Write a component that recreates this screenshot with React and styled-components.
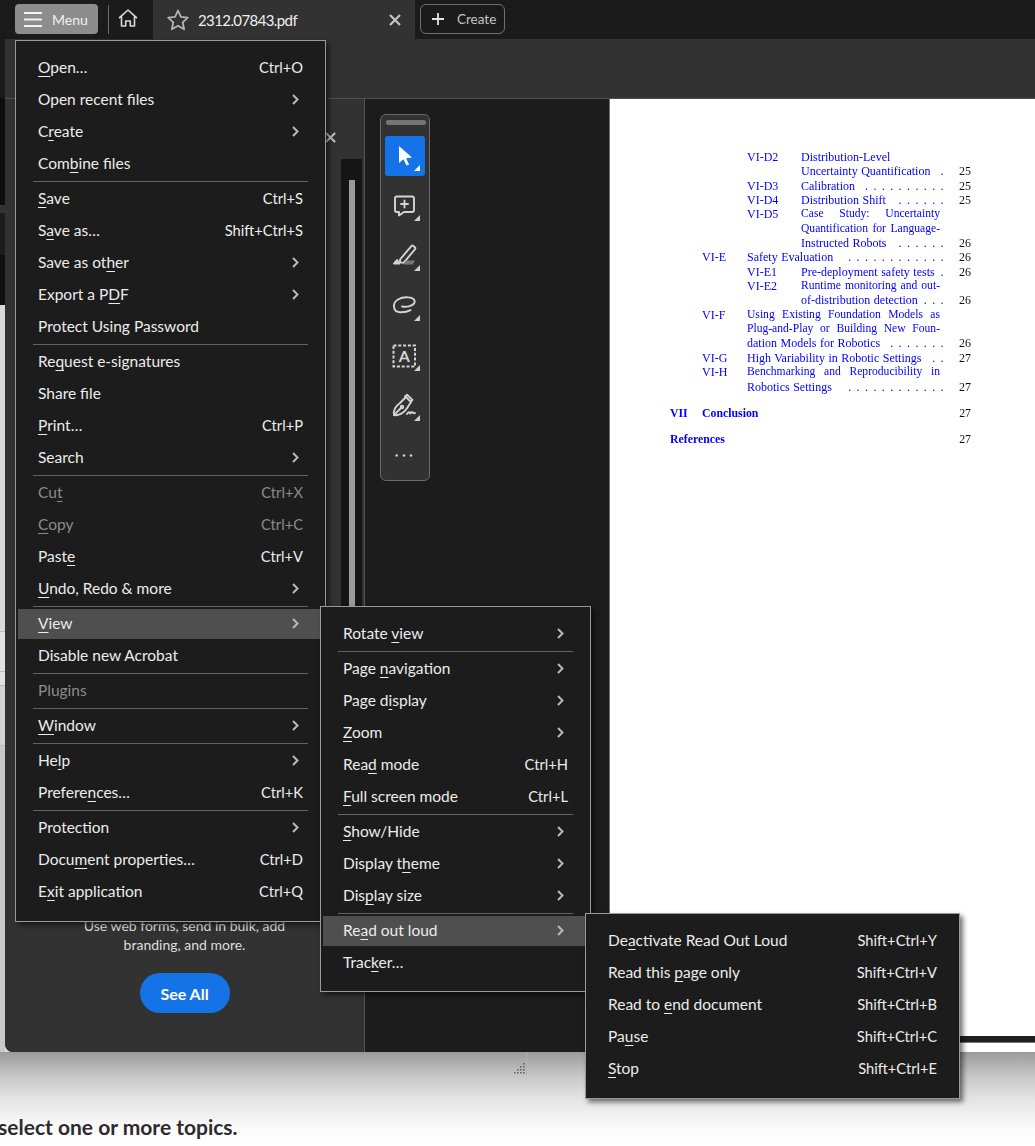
import React from 'react';
import styled, { createGlobalStyle } from 'styled-components';

const GlobalStyle = createGlobalStyle`
  html, body {
    margin: 0;
    padding: 0;
    background: #dcdcdc;
  }
  body {
    width: 1035px;
    height: 1146px;
    overflow: hidden;
    font-family: Lato, "Noto Sans", sans-serif;
  }
`;

const Screen = styled.div`
  position: relative;
  width: 1035px;
  height: 1146px;
  overflow: hidden;
`;

const Upper = styled.div`
  display: flex;
  height: 1052px;
`;

const Sliver = styled.div`
  width: 5px;
  flex: none;
  display: flex;
  flex-direction: column;
`;

const Band = styled.div`
  height: ${({ $h }) => $h}px;
  background: ${({ $c }) => $c};
  border-bottom: ${({ $line }) => ($line ? '1px solid #bdbdbd' : 'none')};
  box-sizing: border-box;
  flex: ${({ $grow }) => ($grow ? 1 : 'none')};
`;

const Win = styled.div`
  flex: 1;
  display: flex;
  flex-direction: column;
  border-radius: 0 0 0 8px;
  overflow: hidden;
  background: #323232;
`;

const TopBar = styled.div`
  height: 39px;
  flex: none;
  display: flex;
  align-items: flex-start;
  background: #1b1b1b;
  padding-left: 10px;
`;

const MenuButton = styled.div`
  width: 83px;
  height: 30px;
  margin-top: 4px;
  background: #8d8d8d;
  border-radius: 4px;
  display: flex;
  align-items: center;
  padding-left: 9px;
  gap: 10px;
  box-sizing: border-box;
  color: #f0f0f0;
  font-size: 14px;
`;

const VDivider = styled.div`
  width: 1px;
  height: 29px;
  margin: 5px 9px 0 10px;
  background: #6a6a6a;
`;

const HomeSlot = styled.div`
  width: 35px;
  height: 39px;
  display: flex;
  align-items: center;
  padding-bottom: 3px;
  box-sizing: border-box;
`;

const Tab = styled.div`
  width: 262px;
  height: 39px;
  background: #323232;
  display: flex;
  align-items: center;
  padding: 0 14px;
  box-sizing: border-box;
  color: #f0f0f0;
`;

const TabName = styled.span`
  margin-left: 9px;
  flex: 1;
  font-size: 15px;
  letter-spacing: -0.6px;
`;

const CreateButton = styled.div`
  width: 85px;
  height: 30px;
  margin: 4px 0 0 5px;
  border: 1px solid #707070;
  border-radius: 6px;
  display: flex;
  align-items: center;
  padding-left: 11px;
  gap: 13px;
  box-sizing: border-box;
  color: #c4c4c4;
  font-size: 13.5px;
`;

const ToolRow = styled.div`
  height: 60px;
  flex: none;
  background: #323232;
  border-bottom: 1px solid #4f4f4f;
  box-sizing: border-box;
`;

const Main = styled.div`
  flex: 1;
  display: flex;
  min-height: 0;
`;

const Panel = styled.div`
  width: 360px;
  flex: none;
  background: #323232;
  border-right: 1px solid #555;
  box-sizing: border-box;
  display: flex;
  flex-direction: column;
  align-items: center;
`;

const PanelHead = styled.div`
  align-self: flex-end;
  height: 60px;
  padding: 28px 28px 0 0;
  box-sizing: border-box;
`;

const ScrollTrack = styled.div`
  align-self: flex-end;
  width: 21px;
  height: 740px;
  margin-right: 2px;
  background: #151515;
  padding: 21px 0 0 8px;
  box-sizing: border-box;
`;

const ScrollThumb = styled.div`
  width: 6px;
  height: 500px;
  background: #9a9a9a;
`;

const PromoText = styled.p`
  margin: 17px 0 0;
  text-align: center;
  color: #dedede;
  font-size: 14px;
  line-height: 19px;
  width: 260px;
`;

const SeeAll = styled.div`
  margin-top: 19px;
  width: 90px;
  height: 40px;
  border-radius: 20px;
  background: #1473e6;
  color: #fff;
  font-weight: 700;
  font-size: 16px;
  display: flex;
  align-items: center;
  justify-content: center;
`;

const Canvas = styled.div`
  width: 245px;
  flex: none;
  background: #1c1c1c;
  border-right: 1px solid #6e6e6e;
  box-sizing: border-box;
  padding: 15px 0 0 15px;
`;

const Rail = styled.div`
  width: 50px;
  height: 367px;
  background: #323232;
  border: 1px solid #6a6a6a;
  border-radius: 6px;
  box-sizing: border-box;
  padding: 5px 0 0 4px;
  display: flex;
  flex-direction: column;
  gap: 10px;
`;

const RailGrip = styled.div`
  width: 40px;
  height: 5px;
  margin: 0 0 1px 1px;
  border-radius: 2px;
  background: #757575;
`;

const ToolButton = styled.div`
  position: relative;
  width: 40px;
  height: 40px;
  flex: none;
  border-radius: 3px;
  background: ${({ $active }) => ($active ? '#1473e6' : 'transparent')};

  svg {
    display: block;
  }
  &::after {
    content: ${({ $more }) => ($more ? '""' : 'none')};
    position: absolute;
    right: 5px;
    bottom: 5px;
    width: 6px;
    height: 6px;
    background: ${({ $active }) => ($active ? '#fff' : '#d2d2d2')};
    clip-path: polygon(100% 0, 100% 100%, 0 100%);
  }
`;

const PageArea = styled.div`
  flex: 1;
  display: flex;
  flex-direction: column;
  background: #fff;
`;

const Sheet = styled.div`
  flex: 1;
  padding: 51px 64px 0 60px;
  font-family: "Liberation Serif", "Times New Roman", serif;
  color: #0000ff;
  filter: blur(0.25px);
`;

const NextEdge = styled.div`
  height: 7px;
  flex: none;
  background: #1f1f1f;
  border-bottom: 1px solid #777;
  box-sizing: border-box;
`;

const NextSheet = styled.div`
  height: 9px;
  flex: none;
  background: #fff;
`;

const TocRow = styled.div`
  display: flex;
  height: 14.35px;
  line-height: 14.35px;
  white-space: nowrap;
  padding-left: ${({ $level }) => [0, 32, 77][$level]}px;
  margin-top: ${({ $gap }) => $gap || 0}px;
  font-weight: ${({ $bold }) => ($bold ? 700 : 400)};
  font-size: ${({ $bold }) => ($bold ? 11.8 : 12)}px;
`;

const TocLabel = styled.span`
  flex: none;
  width: ${({ $level }) => [32, 45, 54][$level]}px;
`;

const TocTitle = styled.span`
  flex: ${({ $fill }) => ($fill ? 1 : 'none')};
  margin-right: ${({ $fill }) => ($fill ? 31 : 0)}px;
  font-size: ${({ $fill }) => ($fill ? '11.6px' : 'inherit')};
  text-align: ${({ $fill }) => ($fill ? 'justify' : 'left')};
  text-align-last: ${({ $fill }) => ($fill ? 'justify' : 'auto')};
  white-space: normal;
  word-spacing: ${({ $fill }) => ($fill ? 0 : 0.5)}px;
`;

const Leader = styled.span`
  flex: 1;
  display: flex;
  justify-content: flex-end;
  overflow: hidden;
  letter-spacing: 5.4px;
  margin-right: 5px;
`;

const TocPage = styled.span`
  flex: none;
  width: 17px;
  text-align: right;
  color: #111;
  font-weight: 400;
`;

const Footer = styled.div`
  height: 94px;
  background: linear-gradient(#9a9a9a 0, #c6c6c6 25%, #e4e4e4 50%, #fafafa 80%, #fff 100%);
  overflow: hidden;
`;

const FooterRule = styled.div`
  width: 527px;
  height: 24px;
  border-bottom: 1px solid #c2c2c2;
  border-right: 1px solid #b0b0b0;
  box-sizing: border-box;
  display: flex;
  justify-content: flex-end;
  align-items: flex-end;
`;

const TopicsLine = styled.div`
  margin: 39px 0 0 -2px;
  font-size: 21px;
  font-weight: 700;
  color: #2c2c2c;
  line-height: 24px;
`;

const MenuPanel = styled.div`
  position: absolute;
  left: ${({ $x }) => $x}px;
  top: ${({ $y }) => $y}px;
  width: ${({ $w }) => $w}px;
  padding: 10px 2px ${({ $bottom }) => $bottom}px;
  background: #1c1c1c;
  border: 1px solid #9a9a9a;
  box-sizing: border-box;
  box-shadow: 3px 3px 5px rgba(0, 0, 0, 0.55);
  font-size: 15.5px;
  z-index: ${({ $z }) => $z};
`;

const MenuRow = styled.div`
  height: 32px;
  display: flex;
  align-items: center;
  justify-content: space-between;
  padding: 0 20px;
  color: ${({ $off }) => ($off ? '#8b8b8b' : '#ececec')};
  background: ${({ $on }) =>
    $on ? 'linear-gradient(transparent 2px, #4f4f4f 2px)' : 'none'};

  u {
    text-underline-offset: 3px;
    text-decoration-thickness: 1px;
  }
`;

const MenuKey = styled.span`
  font-size: 14.7px;
`;

const MenuSep = styled.div`
  height: 1px;
  margin: 2px 15px 0;
  background: #636363;
`;

const Chevron = styled.svg`
  width: 7px;
  height: 11px;
  margin-right: 4px;
  fill: none;
  stroke: #b9b9b9;
  stroke-width: 2;
`;

const ic = { fill: 'none', stroke: '#d4d4d4', strokeWidth: 1.9, strokeLinejoin: 'round', strokeLinecap: 'round' };

const X = ({ size, color }) => (
  <svg width={size} height={size} viewBox="0 0 12 12" fill="none" stroke={color} strokeWidth="2.2">
    <path d="M1 1l10 10M11 1L1 11" />
  </svg>
);

const Bars = () => (
  <svg width="18" height="16" viewBox="0 0 18 16" stroke="#f2f2f2" strokeWidth="2" style={{ flex: 'none' }}>
    <path d="M0 2h18M0 8.500h18M0 15h18" />
  </svg>
);

const Home = () => (
  <svg width="20" height="18" viewBox="0 0 20 18" fill="none" stroke="#d8d8d8" strokeWidth="1.6" strokeLinejoin="round">
    <path d="M1 9.200L10 1l9 8.200M3.500 7.500V17h4.200v-5h4.600v5h4.200V7.500" />
  </svg>
);

const Star = () => (
  <svg width="22" height="22" viewBox="0 0 22 22" fill="none" stroke="#b4b4b4" strokeWidth="1.8" strokeLinejoin="round" style={{ flex: 'none' }}>
    <path d="M11 1.500l2.900 6.400 6.900.8-5.100 4.700 1.400 6.900-6.100-3.500-6.100 3.500 1.400-6.900L1.200 8.700l6.900-.8z" />
  </svg>
);

const Plus = () => (
  <svg width="12" height="12" viewBox="0 0 12 12" stroke="#e4e4e4" strokeWidth="1.8" style={{ flex: 'none' }}>
    <path d="M6 0v12M0 6h12" />
  </svg>
);

const Grip = () => (
  <svg width="13" height="13" viewBox="0 0 13 13" fill="#666">
    {[[10, 1], [7, 4], [10, 4], [4, 7], [7, 7], [10, 7], [1, 10], [4, 10], [7, 10], [10, 10]].map(([x, y]) => (
      <rect key={`${x}-${y}`} x={x} y={y} width="1.6" height="1.6" />
    ))}
  </svg>
);

const icons = [
  <path key="a" d="M14 10v17l4.400-3.800 3.100 6.400 2.600-1.200-3-6.200 5.900-.6z" fill="#fff" />,
  <g key="b" {...ic}>
    <path d="M12 10.500h15a2 2 0 0 1 2 2v11.500a2 2 0 0 1-2 2h-8l-5 3.500v-3.500h-2a2 2 0 0 1-2-2V12.500a2 2 0 0 1 2-2z" />
    <path d="M19.500 14.500v7M16 18h7" />
  </g>,
  <g key="c" {...ic}>
    <path d="M15 23.500L26.300 10.200a1.500 1.500 0 0 1 2.100-.2l1.400 1.200a1.500 1.500 0 0 1 .1 2.100L18.800 26.700l-3.600-.3z" />
    <path d="M9 27.500l3-3.500 2.500 3.500z" fill="#d4d4d4" />
    <path d="M18 28.500l3-4H30l-2.500 4z" fill="#7a7a7a" stroke="none" />
  </g>,
  <path key="d" {...ic} d="M17 20.500c5 1 13-1 12.700-5.200C29.300 10.800 19 10 13 13.500 7 17 7.500 26 15.500 26.300c4 .1 7.500-.8 10-2.200" />,
  <g key="e">
    <rect x="8.500" y="9.500" width="21.500" height="21" fill="none" stroke="#d4d4d4" strokeWidth="2" strokeDasharray="3 1.800" />
    <text x="19.300" y="26" textAnchor="middle" fill="#d4d4d4" fontSize="16" fontWeight="700" fontFamily="Lato, sans-serif">A</text>
  </g>,
  <g key="f" {...ic}>
    <path d="M9 29c-1-4 1.500-9 5.500-11.500L21 11l5 5-4.500 7c-2.500 4-8.500 7-12.500 6z" />
    <path d="M20 10.500l2-1.800 5.500 5.200-1.800 2M9 29l6.500-6.500" />
    <circle cx="17" cy="21" r="1.300" />
    <path d="M22 28c1.500-2 3-2.500 3-1s2-2 3-.5 1 .8 2 .5" />
  </g>,
];

const ToolIcon = ({ children }) => (
  <svg width="40" height="40" viewBox="0 0 40 40">
    {children}
  </svg>
);

// "_" marks the letter that gets the mnemonic underline
const Mnemonic = ({ text }) => {
  const at = text.indexOf('_');
  if (at < 0) return <span>{text}</span>;
  return (
    <span>
      {text.slice(0, at)}
      <u>{text[at + 1]}</u>
      {text.slice(at + 2)}
    </span>
  );
};

const MenuList = ({ rows }) =>
  rows.map((r, i) =>
    r === '-' ? (
      <MenuSep key={i} />
    ) : (
      <MenuRow key={i} $off={r.off} $on={r.on}>
        <Mnemonic text={r.t} />
        {r.k && <MenuKey>{r.k}</MenuKey>}
        {r.sub && (
          <Chevron viewBox="0 0 7 11">
            <path d="M1 1l4.500 4.500L1 10" />
          </Chevron>
        )}
      </MenuRow>
    )
  );

const mainMenu = [
  { t: '_Open…', k: 'Ctrl+O' },
  { t: 'Open recent f_iles', sub: 1 },
  { t: 'C_reate', sub: 1 },
  { t: 'Com_bine files' },
  '-',
  { t: '_Save', k: 'Ctrl+S' },
  { t: 'S_ave as…', k: 'Shift+Ctrl+S' },
  { t: 'Save as ot_her', sub: 1 },
  { t: 'Export a P_DF', sub: 1 },
  { t: 'Protect Using Password' },
  '-',
  { t: 'Re_quest e-signatures' },
  { t: 'Share file' },
  { t: '_Print…', k: 'Ctrl+P' },
  { t: 'Search', sub: 1 },
  '-',
  { t: 'Cu_t', k: 'Ctrl+X', off: 1 },
  { t: '_Copy', k: 'Ctrl+C', off: 1 },
  { t: 'Past_e', k: 'Ctrl+V' },
  { t: '_Undo, Redo & more', sub: 1 },
  '-',
  { t: '_View', sub: 1, on: 1 },
  { t: 'Disable new Acrobat' },
  '-',
  { t: 'Plugins', off: 1 },
  '-',
  { t: '_Window', sub: 1 },
  '-',
  { t: 'He_lp', sub: 1 },
  { t: 'Prefere_nces…', k: 'Ctrl+K' },
  '-',
  { t: 'Protection', sub: 1 },
  { t: 'Docu_ment properties…', k: 'Ctrl+D' },
  { t: 'E_xit application', k: 'Ctrl+Q' },
];

const viewMenu = [
  { t: 'Rotate _view', sub: 1 },
  '-',
  { t: 'Page _navigation', sub: 1 },
  { t: 'Page d_isplay', sub: 1 },
  { t: '_Zoom', sub: 1 },
  { t: 'Rea_d mode', k: 'Ctrl+H' },
  { t: '_Full screen mode', k: 'Ctrl+L' },
  '-',
  { t: '_Show/Hide', sub: 1 },
  { t: 'Display t_heme', sub: 1 },
  { t: 'Dis_play size', sub: 1 },
  '-',
  { t: 'Re_ad out loud', sub: 1, on: 1 },
  { t: 'Trac_ker…' },
];

const readMenu = [
  { t: 'De_activate Read Out Loud', k: 'Shift+Ctrl+Y' },
  { t: 'Read this _page only', k: 'Shift+Ctrl+V' },
  { t: 'Read to _end document', k: 'Shift+Ctrl+B' },
  { t: 'Pa_use', k: 'Shift+Ctrl+C' },
  { t: '_Stop', k: 'Shift+Ctrl+E' },
];

const toc = [
  { l: 2, n: 'VI-D2', t: 'Distribution-Level', plain: 1 },
  { l: 2, t: 'Uncertainty Quantification', d: 1, p: 25 },
  { l: 2, n: 'VI-D3', t: 'Calibration', d: 10, p: 25 },
  { l: 2, n: 'VI-D4', t: 'Distribution Shift', d: 6, p: 25 },
  { l: 2, n: 'VI-D5', t: 'Case Study: Uncertainty', fill: 1 },
  { l: 2, t: 'Quantification for Language-', fill: 1 },
  { l: 2, t: 'Instructed Robots', d: 6, p: 26 },
  { l: 1, n: 'VI-E', t: 'Safety Evaluation', d: 12, p: 26 },
  { l: 2, n: 'VI-E1', t: 'Pre-deployment safety tests', d: 1, p: 26 },
  { l: 2, n: 'VI-E2', t: 'Runtime monitoring and out-', fill: 1 },
  { l: 2, t: 'of-distribution detection', d: 3, p: 26 },
  { l: 1, n: 'VI-F', t: 'Using Existing Foundation Models as', fill: 1 },
  { l: 1, t: 'Plug-and-Play or Building New Foun-', fill: 1 },
  { l: 1, t: 'dation Models for Robotics', d: 7, p: 26 },
  { l: 1, n: 'VI-G', t: 'High Variability in Robotic Settings', d: 2, p: 27 },
  { l: 1, n: 'VI-H', t: 'Benchmarking and Reproducibility in', fill: 1 },
  { l: 1, t: 'Robotics Settings', d: 12, p: 27 },
  { l: 0, n: 'VII', t: 'Conclusion', p: 27, bold: 1, gap: 11.8 },
  { l: 0, t: 'References', p: 27, bold: 1, gap: 11.8 },
];

const TocLine = ({ r }) => (
  <TocRow $level={r.l} $bold={r.bold} $gap={r.gap}>
    {r.l === 0 && !r.n ? null : <TocLabel $level={r.l}>{r.n}</TocLabel>}
    <TocTitle $fill={r.fill}>{r.t}</TocTitle>
    {!r.fill && !r.plain && <Leader>{r.d ? '.'.repeat(r.d) : null}</Leader>}
    {r.p && <TocPage>{r.p}</TocPage>}
  </TocRow>
);

export default function App() {
  return (
    <Screen>
      <GlobalStyle />
      <Upper>
        <Sliver>
          <Band $h={98} $c="#1a1a1a" />
          <Band $h={107} $c="#0d0d0d" />
          <Band $h={8} $c="#333" />
          <Band $h={42} $c="#1c1c1c" />
          <Band $h={50} $c="#101010" />
          <Band $h={327} $c="#dadada" $line />
          <Band $h={40} $c="#e2e2e2" $line />
          <Band $h={14} $c="#e2e2e2" $line />
          <Band $h={60} $c="#d4d4d4" $line />
          <Band $grow $c="#c9c9c9" />
        </Sliver>
        <Win>
          <TopBar>
            <MenuButton>
              <Bars />
              Menu
            </MenuButton>
            <VDivider />
            <HomeSlot>
              <Home />
            </HomeSlot>
            <Tab>
              <Star />
              <TabName>2312.07843.pdf</TabName>
              <X size={12} color="#c4c4c4" />
            </Tab>
            <CreateButton>
              <Plus />
              Create
            </CreateButton>
          </TopBar>
          <ToolRow />
          <Main>
            <Panel>
              <PanelHead>
                <X size={11} color="#c4c4c4" />
              </PanelHead>
              <ScrollTrack>
                <ScrollThumb />
              </ScrollTrack>
              <PromoText>Use web forms, send in bulk, add branding, and more.</PromoText>
              <SeeAll>See All</SeeAll>
            </Panel>
            <Canvas>
              <Rail>
                <RailGrip />
                {icons.map((icon, i) => (
                  <ToolButton key={i} $active={i === 0} $more>
                    <ToolIcon>{icon}</ToolIcon>
                  </ToolButton>
                ))}
                <ToolButton>
                  <ToolIcon>
                    <g fill="#cfcfcf">
                      <circle cx="11.700" cy="19.500" r="1.300" />
                      <circle cx="19" cy="19.500" r="1.300" />
                      <circle cx="26" cy="19.500" r="1.300" />
                    </g>
                  </ToolIcon>
                </ToolButton>
              </Rail>
            </Canvas>
            <PageArea>
              <Sheet>
                {toc.map((r, i) => (
                  <TocLine key={i} r={r} />
                ))}
              </Sheet>
              <NextEdge />
              <NextSheet />
            </PageArea>
          </Main>
        </Win>
      </Upper>
      <Footer>
        <FooterRule>
          <Grip />
        </FooterRule>
        <TopicsLine>select one or more topics.</TopicsLine>
      </Footer>
      <MenuPanel $x={15} $y={40} $w={311} $bottom={14} $z={1}>
        <MenuList rows={mainMenu} />
      </MenuPanel>
      <MenuPanel $x={320} $y={606} $w={271} $bottom={13} $z={2}>
        <MenuList rows={viewMenu} />
      </MenuPanel>
      <MenuPanel $x={585} $y={913} $w={375} $bottom={14} $z={3}>
        <MenuList rows={readMenu} />
      </MenuPanel>
    </Screen>
  );
}
